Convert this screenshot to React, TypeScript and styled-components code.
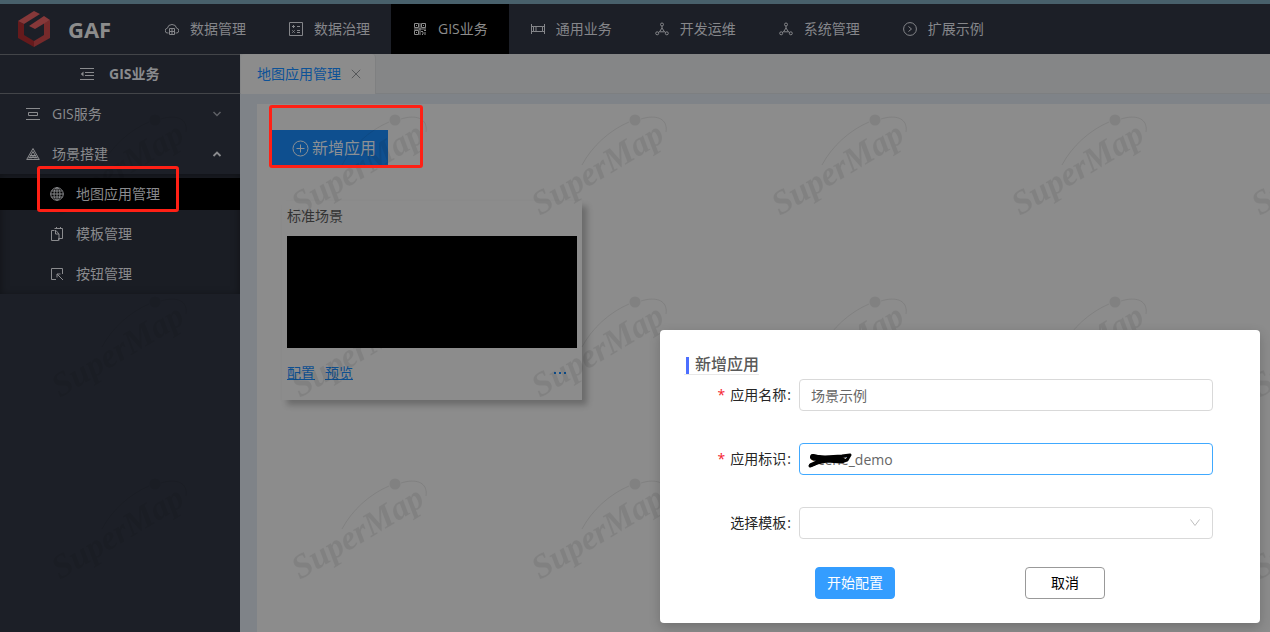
import React from "react";
import styled, { createGlobalStyle } from "styled-components";

const GlobalStyle = createGlobalStyle`
  *, *::before, *::after { box-sizing: border-box; }
  body {
    margin: 0;
    font-family: "Open Sans", "Noto Sans CJK SC", sans-serif;
    font-size: 14px;
    line-height: 20px;
    background: #8c8c8c;
  }
  a { color: inherit; text-decoration: none; }
  button, input, select { font: inherit; }
`;

const Page = styled.div`
  position: relative;
  min-height: 100vh;
  display: flex;
  flex-direction: column;
  overflow: hidden;
`;

const Header = styled.header`
  display: flex;
  align-items: stretch;
  height: 54px;
  background: #1c1f27;
  border-top: 4px solid #48606b;
`;

const Brand = styled.a`
  display: flex;
  align-items: center;
  gap: 18px;
  width: 143px;
  padding-left: 18px;
  font-size: 22px;
  font-weight: 700;
  color: #8c8c8c;
`;

const Nav = styled.nav`
  display: flex;
  min-width: 0;
`;

const NavLink = styled.a<{ $active?: boolean }>`
  display: flex;
  align-items: center;
  gap: 11px;
  padding: 0 21px 0 22px;
  white-space: nowrap;
  color: ${(p) => (p.$active ? "#8c8c8c" : "#85868a")};
  background: ${(p) => (p.$active ? "#000" : "transparent")};
`;

const Icon = styled.svg`
  flex: none;
  display: block;
  fill: none;
  stroke: currentColor;
`;

const Body = styled.div`
  flex: 1;
  display: flex;
`;

const Sidebar = styled.aside`
  flex: none;
  width: 240px;
  background: #1c1f27;
  color: #8a8b8e;
`;

const SideTitle = styled.div`
  display: flex;
  align-items: center;
  gap: 15px;
  height: 40px;
  padding-left: 80px;
  border-top: 1px solid #434549;
  border-bottom: 1px solid #434549;
  font-weight: 700;
`;

const List = styled.ul`
  list-style: none;
  margin: 0;
  padding: 0;
`;

const SubList = styled(List)`
  background: #1a1d24;
  box-shadow: inset 0 2px 8px rgba(0, 0, 0, 0.4);
`;

const GroupButton = styled.button`
  display: flex;
  align-items: center;
  gap: 12px;
  width: 100%;
  height: 40px;
  padding: 0 18px 0 26px;
  border: 0;
  background: transparent;
  color: inherit;
  text-align: left;
`;

const Grow = styled.span`
  flex: 1;
`;

const SubItem = styled.li`
  position: relative;
  padding: 4px 0;
`;

const SubLink = styled.a<{ $active?: boolean }>`
  display: flex;
  align-items: center;
  gap: 12px;
  height: 32px;
  padding-left: 50px;
  background: ${(p) => (p.$active ? "#000" : "transparent")};
`;

const Marker = styled.span<{ $top: number; $left: number; $w: number; $h: number }>`
  position: absolute;
  z-index: 3;
  top: ${(p) => p.$top}px;
  left: ${(p) => p.$left}px;
  width: ${(p) => p.$w}px;
  height: ${(p) => p.$h}px;
  border: 3px solid #ff2015;
  border-radius: 3px;
  pointer-events: none;
`;

const Main = styled.main`
  flex: 1;
  min-width: 0;
  display: flex;
  flex-direction: column;
  background: #7f8388;
`;

const TabBar = styled.div`
  display: flex;
  height: 40px;
  padding-left: 1px;
  background: #858687;
  border-bottom: 1px solid #7d7f81;
`;

const Tab = styled.div`
  display: flex;
  align-items: center;
  gap: 10px;
  height: 40px;
  padding: 0 14px 0 16px;
  border-right: 1px solid #7f8081;
  border-radius: 4px 4px 0 0;
  background: #8c8c8c;
  color: #0d5297;
`;

const CloseTab = styled.button`
  display: flex;
  padding: 0;
  border: 0;
  background: transparent;
  color: #55585a;
`;

const Panel = styled.section`
  flex: 1;
  margin: 10px 0 0 17px;
  padding: 26px 15px;
  background: #8c8c8c;
`;

const AddWrap = styled.div`
  position: relative;
  display: flex;
`;

const AddButton = styled.button`
  display: flex;
  align-items: center;
  gap: 3px;
  height: 36px;
  padding: 0 12px 0 20px;
  border: 0;
  background: #0e4f8f;
  color: #8c9094;
  font-size: 16px;
`;

const Card = styled.article`
  width: 300px;
  margin: 35px 0 0 10px;
  padding: 5px 5px 17px;
  box-shadow: 5px 5px 6px rgba(0, 0, 0, 0.24);
  color: #333;
`;

const CardTitle = styled.h2`
  margin: 0;
  font-size: 14px;
  font-weight: 400;
  line-height: 20px;
`;

const Preview = styled.div`
  height: 112px;
  margin: 10px 0 15px;
  background: #000;
`;

const CardLinks = styled.div`
  display: flex;
  align-items: center;
  gap: 10px;
  padding-right: 11px;
  color: #0e4f8f;
`;

const CardLink = styled.a`
  text-decoration: underline;
`;

const MoreButton = styled.button`
  display: flex;
  margin-left: auto;
  padding: 0;
  border: 0;
  background: transparent;
  color: inherit;
`;

const WatermarkLayer = styled.svg`
  position: absolute;
  z-index: 1;
  top: 94px;
  left: 0;
  width: 100%;
  height: calc(100% - 94px);
  pointer-events: none;
`;

const Dialog = styled.section`
  position: absolute;
  z-index: 4;
  right: 10px;
  bottom: 9px;
  width: 600px;
  max-width: calc(100% - 20px);
  padding: 24px 47px 24px 24px;
  border-radius: 4px;
  background: #fff;
  box-shadow: 0 4px 12px rgba(0, 0, 0, 0.2);
`;

const DialogTitle = styled.h1`
  display: flex;
  align-items: center;
  gap: 6px;
  width: fit-content;
  height: 21px;
  margin: 0 0 4px;
  padding-left: 2px;
  border-bottom: 1px solid #e8e8e8;
  font-size: 16px;
  font-weight: 500;
  color: #595959;

  &::before {
    content: "";
    align-self: flex-end;
    width: 3px;
    height: 17px;
    background: #4c6fff;
  }
`;

const Field = styled.div`
  position: relative;
  display: flex;
  align-items: center;
  margin-bottom: 32px;
`;

const Label = styled.label`
  display: flex;
  justify-content: flex-end;
  width: 115px;
  padding-right: 8px;
  white-space: nowrap;
  color: #262626;

  &::after {
    content: ":";
    padding-left: 1px;
  }
`;

const Required = styled.span`
  padding-right: 5px;
  color: #f5222d;
`;

const TextInput = styled.input<{ $focused?: boolean }>`
  flex: 1;
  min-width: 0;
  height: 32px;
  padding: 0 11px;
  border: 1px solid ${(p) => (p.$focused ? "#40a9ff" : "#d9d9d9")};
  border-radius: 4px;
  outline: 0;
  background: #fff;
  color: #666;
`;

const Select = styled.select`
  flex: 1;
  min-width: 0;
  height: 32px;
  padding: 0 11px;
  border: 1px solid #d9d9d9;
  border-radius: 4px;
  appearance: none;
  background: #fff;
`;

const SelectArrow = styled(Icon)`
  position: absolute;
  right: 12px;
  top: 10px;
  color: #bfbfbf;
  pointer-events: none;
`;

const Scribble = styled.svg`
  position: absolute;
  left: 123px;
  top: 8px;
  pointer-events: none;
`;

const Actions = styled.div`
  display: flex;
  gap: 130px;
  margin-top: -4px;
  padding-left: 131px;
`;

const ActionButton = styled.button<{ $primary?: boolean }>`
  width: 80px;
  height: 32px;
  padding: 0;
  border: 1px solid ${(p) => (p.$primary ? "#349dff" : "#999")};
  border-radius: 4px;
  background: ${(p) => (p.$primary ? "#349dff" : "#fff")};
  color: ${(p) => (p.$primary ? "#fff" : "#000")};
`;

type IconName =
  | "cloud" | "calc" | "qr" | "ratio" | "nodes" | "next"
  | "fold" | "service" | "scene" | "globe" | "template" | "pointer";

const shapes: Record<IconName, React.ReactNode> = {
  cloud: (
    <>
      <path d="M3.500 11H2.800A2.300 2.300 0 0 1 2.300 6.300 4.800 4.800 0 0 1 11.700 6.300a2.300 2.300 0 0 1-.5 4.700h-.7" />
      <path d="M4.500 6.500h5v6h-5zM4.500 9.500h5M7 6.500v6" />
    </>
  ),
  calc: (
    <>
      <path d="M.5.500h13v13H.5z" />
      <path d="M3 4.500h3M4.500 3v3M8 4.500h3M3.300 8.300l2.400 2.400M5.700 8.300l-2.400 2.400M8 8.500h3M8 10.500h3" />
    </>
  ),
  qr: (
    <>
      <path d="M1.500 1.500h4v4h-4zM8.500 1.500h4v4h-4zM1.500 8.500h4v4h-4z" />
      <path d="M3 3.500h1M10 3.500h1M3 10.500h1M7 1v12M1 7h12M8 9.500h2M11 8.500h2M9 12.500h1M12 10v3M10 10v2" />
    </>
  ),
  ratio: (
    <path d="M.5 2v10M13.500 2v10M2.500 4.500h9v5h-9zM5 4.500v5M.5 4.500h2M.5 9.500h2M11.500 4.500h2M11.500 9.500h2" />
  ),
  nodes: (
    <>
      <circle cx="7" cy="2.500" r="1.500" />
      <circle cx="2.200" cy="11.300" r="1.500" />
      <circle cx="11.800" cy="11.300" r="1.500" />
      <path d="M7 4v2M7 6L4.500 9.800M7 6l2.500 3.800M4.500 9.800h5M4.500 9.800l-1.200.700M9.500 9.800l1.200.700" />
    </>
  ),
  next: (
    <>
      <circle cx="7" cy="7" r="6.400" />
      <path d="M5.500 4.500L8.500 7l-3 2.500" />
    </>
  ),
  fold: (
    <>
      <path d="M0 1.500h14M5 5.500h9M5 8.500h9M0 12.500h14" />
      <path d="M3.500 4.500L.8 7l2.700 2.500z" fill="currentColor" stroke="none" />
    </>
  ),
  service: <path d="M0 1.500h14M0 12.500h14M2.500 5.500h9v3h-9z" />,
  scene: (
    <>
      <path d="M7 1.500L13.300 12.500H.7z" />
      <path d="M7 4.500l4 7M7 4.500l-4 7M7 8l2 3.500M7 8l-2 3.500M2.500 10.500h9M4 8.500h6" />
    </>
  ),
  globe: (
    <>
      <circle cx="7" cy="7" r="6.300" />
      <ellipse cx="7" cy="7" rx="3" ry="6.300" />
      <path d="M7 .7v12.600M.7 7h12.600M1.500 4h11M1.500 10h11" />
    </>
  ),
  template: (
    <>
      <path d="M4 3.500H1.500v10h7v-2" />
      <path d="M4.500 1.500h8v10h-4M4.500 3.500H6L9 7v6.500M5.500 3.500V7H9M6.500 0v2M10.500 0v2" />
    </>
  ),
  pointer: (
    <>
      <path d="M6 12.500H1.500v-11h11V7" />
      <path d="M7 7l6 6M7 10.500V7h3.500" />
    </>
  ),
};

const Glyph = ({ name }: { name: IconName }) => (
  <Icon width="14" height="14" viewBox="0 0 14 14" aria-hidden="true">
    {shapes[name]}
  </Icon>
);

const navItems: { icon: IconName; text: string; active?: boolean }[] = [
  { icon: "cloud", text: "数据管理" },
  { icon: "calc", text: "数据治理" },
  { icon: "qr", text: "GIS业务", active: true },
  { icon: "ratio", text: "通用业务" },
  { icon: "nodes", text: "开发运维" },
  { icon: "nodes", text: "系统管理" },
  { icon: "next", text: "扩展示例" },
];

const subItems: { icon: IconName; text: string; active?: boolean }[] = [
  { icon: "globe", text: "地图应用管理", active: true },
  { icon: "template", text: "模板管理" },
  { icon: "pointer", text: "按钮管理" },
];

const Logo = () => (
  <svg width="32" height="36" viewBox="0 0 32 36" aria-hidden="true">
    <path d="M0 10l6 3v11l10 6v6L0 27z" fill="#651a1c" />
    <path d="M32 9v18l-16 9v-6l10-6V12z" fill="#762a2b" />
    <path d="M0 10L16 0l6 3L6 13z" fill="#863839" />
    <path d="M11 15L26 5l6 4-15 9z" fill="#863839" />
  </svg>
);

const Watermark = () => (
  <WatermarkLayer aria-hidden="true">
    <defs>
      <pattern id="brand-mark" width="240" height="182" patternUnits="userSpaceOnUse">
        <g fill="#000" fillOpacity="0.08">
          <text
            transform="translate(60 122) rotate(-31)"
            fontFamily="Liberation Serif, serif"
            fontSize="34"
            fontStyle="italic"
            fontWeight="700"
          >
            SuperMap
          </text>
          <circle cx="155" cy="26" r="5.500" />
        </g>
        <path
          d="M102 71C112 52 130 36 149 28M161 25C177 20 188 25 186 38"
          fill="none"
          stroke="#000"
          strokeOpacity="0.08"
        />
      </pattern>
    </defs>
    <rect width="100%" height="100%" fill="url(#brand-mark)" />
  </WatermarkLayer>
);

export default function App() {
  return (
    <Page>
      <GlobalStyle />
      <Header>
        <Brand href="#">
          <Logo />
          GAF
        </Brand>
        <Nav>
          {navItems.map((item) => (
            <NavLink key={item.text} href="#" $active={item.active}>
              <Glyph name={item.icon} />
              {item.text}
            </NavLink>
          ))}
        </Nav>
      </Header>
      <Body>
        <Sidebar>
          <SideTitle>
            <Glyph name="fold" />
            GIS业务
          </SideTitle>
          <List>
            <li>
              <GroupButton type="button" aria-expanded="false">
                <Glyph name="service" />
                <Grow>GIS服务</Grow>
                <Icon width="10" height="10" viewBox="0 0 10 10" strokeWidth="1.500" opacity="0.6">
                  <path d="M1.500 3L5 6.500 8.500 3" />
                </Icon>
              </GroupButton>
            </li>
            <li>
              <GroupButton type="button" aria-expanded="true">
                <Glyph name="scene" />
                <Grow>场景搭建</Grow>
                <Icon width="10" height="10" viewBox="0 0 10 10" strokeWidth="1.800">
                  <path d="M1.500 7L5 3.500 8.500 7" />
                </Icon>
              </GroupButton>
              <SubList>
                {subItems.map((item) => (
                  <SubItem key={item.text}>
                    <SubLink href="#" $active={item.active}>
                      <Glyph name={item.icon} />
                      {item.text}
                    </SubLink>
                    {item.active && <Marker $top={-8} $left={37} $w={142} $h={46} />}
                  </SubItem>
                ))}
              </SubList>
            </li>
          </List>
        </Sidebar>
        <Main>
          <TabBar>
            <Tab>
              地图应用管理
              <CloseTab type="button" aria-label="关闭">
                <Icon width="10" height="10" viewBox="0 0 10 10">
                  <path d="M.8.8l8.400 8.400M9.200.8L.8 9.200" />
                </Icon>
              </CloseTab>
            </Tab>
          </TabBar>
          <Panel>
            <AddWrap>
              <AddButton type="button">
                <Icon width="17" height="17" viewBox="0 0 17 17">
                  <circle cx="8.500" cy="8.500" r="7.500" />
                  <path d="M8.500 4.500v8M4.500 8.500h8" />
                </Icon>
                新增应用
              </AddButton>
              <Marker $top={-25} $left={-3} $w={154} $h={63} />
            </AddWrap>
            <Card>
              <CardTitle>标准场景</CardTitle>
              <Preview />
              <CardLinks>
                <CardLink href="#">配置</CardLink>
                <CardLink href="#">预览</CardLink>
                <MoreButton type="button" aria-label="更多">
                  <svg width="12" height="4" viewBox="0 0 12 4" fill="currentColor">
                    <path d="M0 1h2v2H0zM5 1h2v2H5zM10 1h2v2h-2z" />
                  </svg>
                </MoreButton>
              </CardLinks>
            </Card>
          </Panel>
        </Main>
      </Body>
      <Watermark />
      <Dialog role="dialog" aria-labelledby="dialog-title">
        <DialogTitle id="dialog-title">新增应用</DialogTitle>
        <Field>
          <Label htmlFor="app-name">
            <Required>*</Required>
            应用名称
          </Label>
          <TextInput id="app-name" defaultValue="场景示例" />
        </Field>
        <Field>
          <Label htmlFor="app-id">
            <Required>*</Required>
            应用标识
          </Label>
          <TextInput id="app-id" $focused defaultValue="scene_demo" />
          <Scribble width="46" height="18" viewBox="0 0 46 18" fill="none" stroke="#000" strokeLinecap="round" strokeLinejoin="round" aria-hidden="true">
            <path d="M5 5L18 6 35 5 43 4 40 9 34 11 20 10 10 12 3 15" strokeWidth="3" />
            <path d="M6 6L14 8 24 8 35 9" strokeWidth="6" />
            <path d="M4 14L11 11" strokeWidth="4" />
          </Scribble>
        </Field>
        <Field>
          <Label htmlFor="app-template">选择模板</Label>
          <Select id="app-template" defaultValue="">
            <option value="" />
          </Select>
          <SelectArrow width="12" height="12" viewBox="0 0 12 12">
            <path d="M1.500 2.500L6 8.500l4.500-6" />
          </SelectArrow>
        </Field>
        <Actions>
          <ActionButton type="button" $primary>开始配置</ActionButton>
          <ActionButton type="button">取消</ActionButton>
        </Actions>
      </Dialog>
    </Page>
  );
}
